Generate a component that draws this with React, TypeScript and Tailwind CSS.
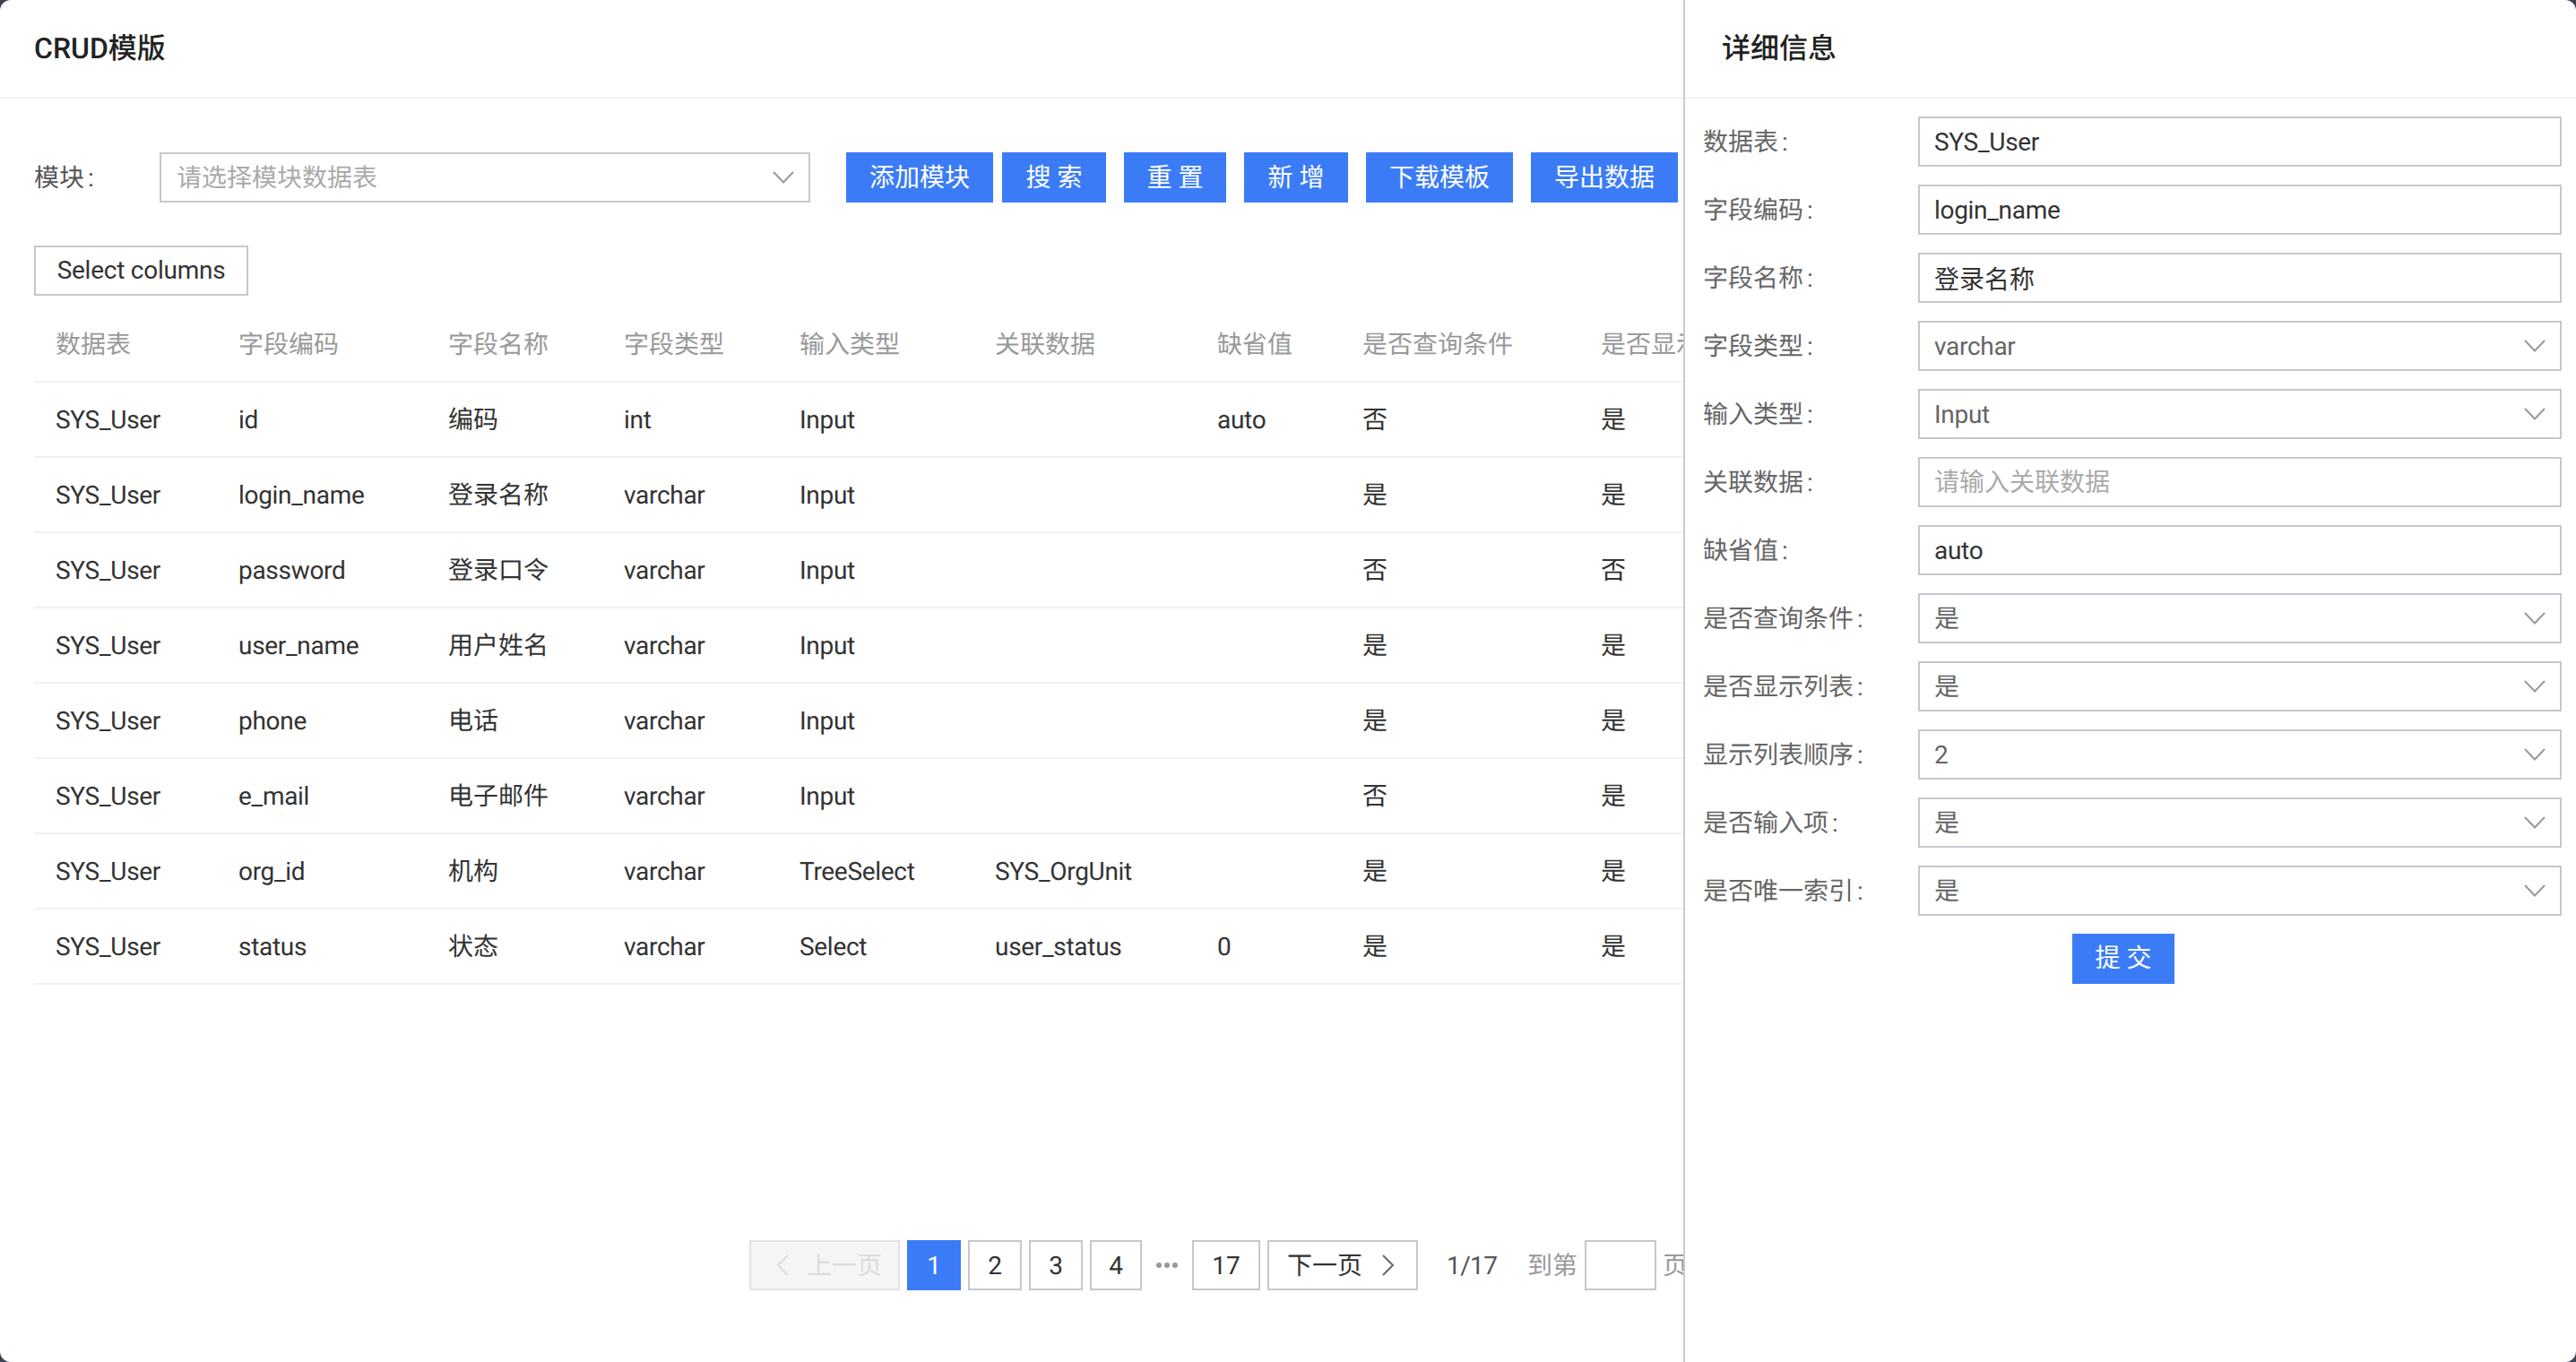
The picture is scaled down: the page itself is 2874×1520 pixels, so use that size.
const fields = [
  ['SYS_User', 'id', '编码', 'int', 'Input', '', 'auto', '否', '是'],
  ['SYS_User', 'login_name', '登录名称', 'varchar', 'Input', '', '', '是', '是'],
  ['SYS_User', 'password', '登录口令', 'varchar', 'Input', '', '', '否', '否'],
  ['SYS_User', 'user_name', '用户姓名', 'varchar', 'Input', '', '', '是', '是'],
  ['SYS_User', 'phone', '电话', 'varchar', 'Input', '', '', '是', '是'],
  ['SYS_User', 'e_mail', '电子邮件', 'varchar', 'Input', '', '', '否', '是'],
  ['SYS_User', 'org_id', '机构', 'varchar', 'TreeSelect', 'SYS_OrgUnit', '', '是', '是'],
  ['SYS_User', 'status', '状态', 'varchar', 'Select', 'user_status', '0', '是', '是'],
]

const headers = ['数据表', '字段编码', '字段名称', '字段类型', '输入类型', '关联数据', '缺省值', '是否查询条件', '是否显示列表']

const colWidths = ['w-[204px]', 'w-[234px]', 'w-[196px]', 'w-[196px]', 'w-[218px]', 'w-[248px]', 'w-[162px]', 'w-[266px]', 'w-[200px]']

const actions = [
  { label: '搜 索', width: 'w-[116px]' },
  { label: '重 置', width: 'w-[114px]' },
  { label: '新 增', width: 'w-[116px]' },
  { label: '下载模板', width: 'w-[164px]' },
  { label: '导出数据', width: 'w-[164px]' },
]

const formRows = [
  { label: '数据表', value: 'SYS_User', type: 'input' },
  { label: '字段编码', value: 'login_name', type: 'input' },
  { label: '字段名称', value: '登录名称', type: 'input' },
  { label: '字段类型', value: 'varchar', type: 'select' },
  { label: '输入类型', value: 'Input', type: 'select' },
  { label: '关联数据', value: '', type: 'input', placeholder: '请输入关联数据' },
  { label: '缺省值', value: 'auto', type: 'input' },
  { label: '是否查询条件', value: '是', type: 'select' },
  { label: '是否显示列表', value: '是', type: 'select' },
  { label: '显示列表顺序', value: '2', type: 'select' },
  { label: '是否输入项', value: '是', type: 'select' },
  { label: '是否唯一索引', value: '是', type: 'select' },
]

// latin text runs slightly wide in Roboto here, CJK is fine
const track = (s: string) => (/^[\x00-\x7f]+$/.test(s) ? 'tracking-[-0.3px]' : '')

function ChevronDown() {
  return (
    <svg className="shrink-0" width="24" height="14" viewBox="0 0 24 14" fill="none" stroke="#999" strokeWidth="2">
      <path d="M1 1 L12 12.5 L23 1" />
    </svg>
  )
}

function ChevronSide({ dir, color }: { dir: 'left' | 'right'; color: string }) {
  return (
    <svg className="shrink-0" width="14" height="24" viewBox="0 0 14 24" fill="none" stroke={color} strokeWidth="2">
      <path d={dir === 'left' ? 'M13 1 L2 12 L13 23' : 'M1 1 L12 12 L1 23'} />
    </svg>
  )
}

function PageButton({ label, width, active }: { label: string; width: string; active?: boolean }) {
  return (
    <div
      className={`${width} h-14 shrink-0 pt-[2px] flex items-center justify-center border-2 ${
        active ? 'bg-[#3b7cf6] border-[#3b7cf6] text-white' : 'border-[#c4c8ce] text-[#333]'
      }`}
    >
      {label}
    </div>
  )
}

export default function App() {
  return (
    <div className="w-[2874px] h-[1520px] bg-[#3c4152] overflow-hidden font-[Roboto,'Noto_Sans_CJK_SC',sans-serif] [text-rendering:geometricPrecision] text-[28px] text-[#333]">
      <div className="w-full h-full bg-white rounded-[12px] flex overflow-hidden">
        {/* LEFT PANEL */}
        <div className="w-[1878px] h-full shrink-0 flex flex-col overflow-hidden">
          <div className="h-[110px] shrink-0 border-b-2 border-[#f2f2f2] pl-[38px] flex items-center text-[32px] font-medium text-[#222]">
            CRUD模版
          </div>

          <div className="pl-[38px] mt-[60px] flex items-center h-14 shrink-0">
            <div className="w-[140px] shrink-0 pt-[2px] text-[#555]">
              模块<span className="ml-1">:</span>
            </div>
            <div className="w-[726px] h-14 shrink-0 border-2 border-[#c4c8ce] flex items-center justify-between pl-[17px] pr-4 text-[#aaa]">
              <span className="pt-[2px]">请选择模块数据表</span>
              <ChevronDown />
            </div>
            <button className="ml-10 mr-[10px] shrink-0 w-[164px] h-14 pt-[2px] bg-[#3b7cf6] text-white">添加模块</button>
            <div className="flex gap-5 shrink-0">
              {actions.map((a) => (
                <button key={a.label} className={`${a.width} h-14 pt-[2px] bg-[#3b7cf6] text-white`}>
                  {a.label}
                </button>
              ))}
            </div>
          </div>

          <div className="pl-[38px] mt-12 shrink-0">
            <button className="w-[239px] h-14 border-2 border-[#c4c8ce] text-[#333] tracking-[-0.25px]">Select columns</button>
          </div>

          <div className="pl-[38px] mt-3 shrink-0">
            <table className="table-fixed w-[1924px] border-separate border-spacing-0">
              <colgroup>
                {colWidths.map((w, i) => (
                  <col key={i} className={w} />
                ))}
              </colgroup>
              <thead>
                <tr>
                  {headers.map((h) => (
                    <th key={h} className="h-[85px] pl-6 pt-[3px] text-left font-normal whitespace-nowrap text-[#999] border-b-2 border-[#f0f0f5]">
                      {h}
                    </th>
                  ))}
                </tr>
              </thead>
              <tbody>
                {fields.map((row) => (
                  <tr key={row[1]}>
                    {row.map((cell, i) => (
                      <td key={i} className={`h-[84px] pl-6 pt-[2px] whitespace-nowrap border-b-2 border-[#f0f0f5] ${track(cell)}`}>
                        {cell}
                      </td>
                    ))}
                  </tr>
                ))}
              </tbody>
            </table>
          </div>

          {/* PAGINATION */}
          <div className="mt-auto mb-20 pl-[836px] flex items-center h-14 shrink-0 whitespace-nowrap">
            <div className="w-[168px] h-14 shrink-0 mr-2 flex items-center pl-7 gap-[20px] bg-[#f5f5f5] border-2 border-[#e2e2e2] text-[#dcdcdc]">
              <ChevronSide dir="left" color="#dcdcdc" />
              <span className="pt-[2px]">上一页</span>
            </div>
            <div className="flex gap-2 shrink-0">
              <PageButton label="1" width="w-[60px]" active />
              <PageButton label="2" width="w-[60px]" />
              <PageButton label="3" width="w-[60px]" />
              <PageButton label="4" width="w-[58px]" />
            </div>
            <div className="w-14 shrink-0 flex items-center justify-center gap-[3px]">
              <span className="w-[6px] h-[6px] rounded-full bg-[#999]" />
              <span className="w-[6px] h-[6px] rounded-full bg-[#999]" />
              <span className="w-[6px] h-[6px] rounded-full bg-[#999]" />
            </div>
            <PageButton label="17" width="w-[76px]" />
            <div className="w-[168px] h-14 shrink-0 ml-2 flex items-center pl-[20px] gap-[22px] border-2 border-[#c4c8ce]">
              <span className="pt-[2px]">下一页</span>
              <ChevronSide dir="right" color="#666" />
            </div>
            <span className="w-[56px] ml-8 pt-[2px] shrink-0 text-[#555] tracking-[-0.6px]">1/17</span>
            <span className="ml-[34px] pt-[2px] shrink-0 text-[#999]">到第</span>
            <div className="w-20 h-14 shrink-0 ml-[8px] border-2 border-[#c4c8ce]" />
            <span className="ml-[7px] pt-[2px] shrink-0 text-[#999]">页</span>
          </div>
        </div>

        {/* RIGHT PANEL */}
        <div className="flex-1 h-full border-l-2 border-[#c8cbd0]">
          <div className="h-[110px] border-b-2 border-[#f2f2f2] pl-[41px] flex items-center text-[32px] font-medium text-[#222]">
            详细信息
          </div>
          <div className="pl-5 pr-4 pt-5 flex flex-col gap-5">
            {formRows.map((r) => (
              <div key={r.label} className="flex items-center h-14">
                <div className="w-[240px] shrink-0 pt-[2px] text-[#666]">
                  {r.label}
                  <span className="ml-1">:</span>
                </div>
                {r.type === 'input' ? (
                  <input
                    readOnly
                    value={r.value}
                    placeholder={r.placeholder}
                    className={`flex-1 min-w-0 h-14 border-2 border-[#c4c8ce] pl-4 outline-none text-[#333] placeholder:text-[#aaa] ${track(r.value)}`}
                  />
                ) : (
                  <div className="flex-1 h-14 border-2 border-[#c4c8ce] flex items-center justify-between pl-4 pr-4 text-[#666]">
                    <span className={`pt-[1px] ${track(r.value)}`}>{r.value}</span>
                    <ChevronDown />
                  </div>
                )}
              </div>
            ))}
            <button className="ml-[412px] w-[114px] h-14 bg-[#3b7cf6] text-white">提 交</button>
          </div>
        </div>
      </div>
    </div>
  )
}
